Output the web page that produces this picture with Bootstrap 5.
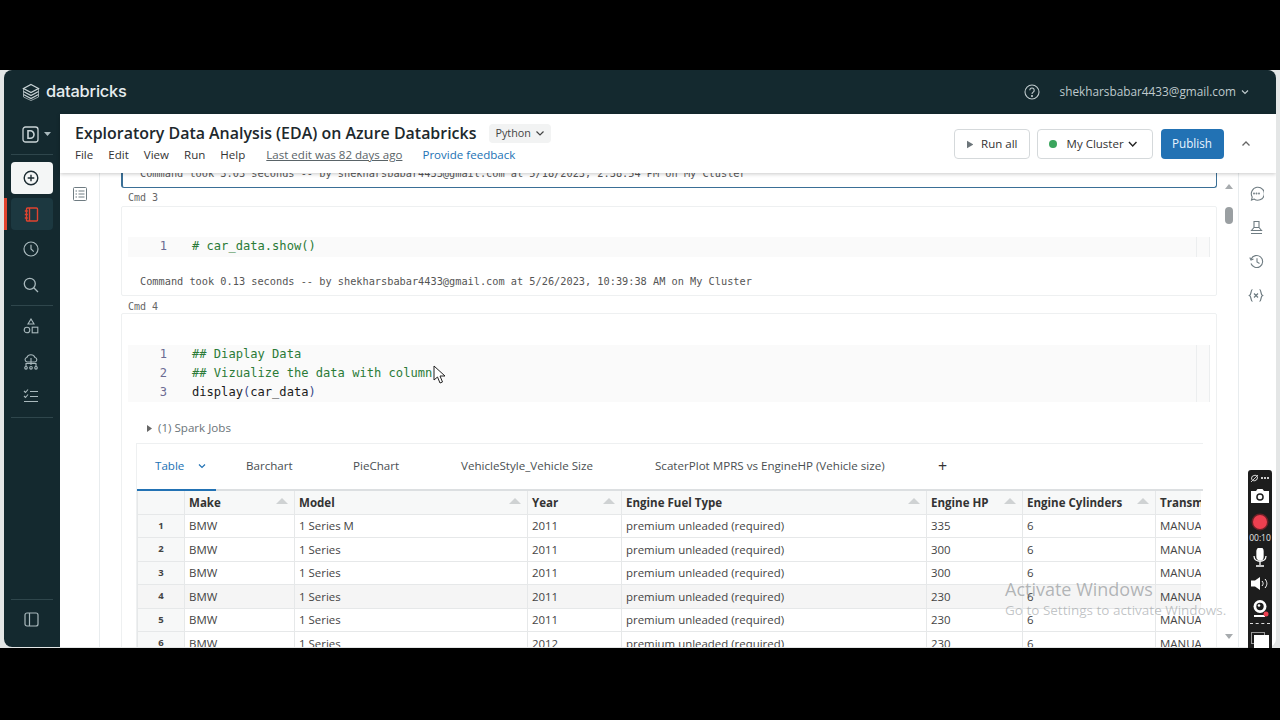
<!DOCTYPE html>
<html lang="en"><head><meta charset="utf-8"><title>EDA</title>
<link href="https://cdn.jsdelivr.net/npm/bootstrap@5.3.0/dist/css/bootstrap.min.css" rel="stylesheet">
<style>
html,body{height:720px;overflow:hidden;background:#000}
body{font-family:"Open Sans","Noto Sans",sans-serif;font-size:12px;color:#333;position:relative}
.stage{margin-top:70px;height:578px;background:#e4e6e6;padding:0 4px 1px}
.win{height:577px;border-radius:8px;overflow:hidden;background:#fff;display:flex;flex-direction:column}
.topbar{height:44px;flex:none;background:#14292f;color:#c9d3d6;padding:0 26px 0 18px}
.brand{font-family:Inter,sans-serif;font-size:16.4px;font-weight:500;color:#e6ecee;letter-spacing:-.2px;margin-left:6px;margin-bottom:2px}
.mail{font-size:11.8px;color:#bfcacd;margin-left:20px}
.below{flex:1;min-height:0;display:flex}
.side{width:56px;flex:none;background:#14292f;position:relative;display:flex;flex-direction:column;align-items:center;color:#a9b9bd}
.sideitem{height:36px;display:flex;align-items:center;justify-content:center;width:100%;padding-right:2px}
.sidesep{width:42px;height:1px;background:#2f464c;margin:0 auto;flex:none}
.plusbtn{width:42px;height:32px;background:#f4f6f6;border-radius:4px;display:flex;align-items:center;justify-content:center;margin-top:7px;padding-right:2px}
.activebtn{width:42px;height:32px;background:#1c3840;border-radius:4px;display:flex;align-items:center;justify-content:center;margin-top:4px;margin-bottom:1px;padding-right:2px}
.redbar{position:absolute;left:0;top:84px;width:3px;height:32px;background:#e0432f}
.dhead{height:40px;gap:5px;margin-left:8px}
.maincol{flex:1;min-width:0;display:flex;flex-direction:column}
.nbhead{height:59px;flex:none;background:#fff;box-shadow:0 1px 4px rgba(0,0,0,.22);position:relative;z-index:2;padding:7px 25px 0 15px}
.nbtitle{font-size:15.95px;font-weight:600;color:#20282c;line-height:24px}
.langbtn{background:#f2f3f3;border-radius:4px;font-size:10.8px;color:#444;padding:1px 6px;margin-left:13px;height:19px}
.menux{font-size:11.55px;color:#333;line-height:18px;margin-top:1px}
.menux span{margin-right:15px}
.menux .lastedit{text-decoration:underline;color:#5a6468;margin-left:6px;margin-right:20px}
.menux .feed{color:#2272b4;margin-right:0}
.tbtn{height:30px;border:1px solid #d5d9db;border-radius:4px;background:#fff;font-size:11.5px;color:#333;display:flex;align-items:center;white-space:nowrap;flex:none}
.runx{padding:0 11px 0 12px;gap:8px;width:76px}
.clusterx{padding:0 15px 0 11px;width:116px}
.pub{height:30px;width:63px;flex:none;background:#2272b4;border-radius:4px;color:#e8f4ff;font-size:11.7px;display:flex;align-items:center;justify-content:center}
.btnrow{padding-top:8px;gap:7.5px}
.bodyrow{flex:1;min-height:0;display:flex;overflow:hidden}
.tocx{width:40px;flex:none;border-right:1px solid #e8ecee;padding:14px 0 0 13px;line-height:0}
.nbscroll{flex:1;min-width:0;padding-left:21px;overflow:hidden}
.sbar{width:21px;flex:none;display:flex;flex-direction:column;align-items:center;padding:11px 0 8px;position:relative}
.thumb{width:8px;height:17px;border-radius:4px;background:#9a9fa2;margin-top:18px;margin-left:3px}
.tri-up{width:0;height:0;border:4px solid transparent;border-top:0;border-bottom:5px solid #a7abae;margin-left:3px}
.tri-dn{width:0;height:0;border:4px solid transparent;border-bottom:0;border-top:5px solid #a7abae;margin-top:auto;margin-left:3px}
.rail{width:38px;flex:none;border-left:1px solid #e8ecee;display:flex;flex-direction:column;align-items:center;padding:10px 3px 0 0;gap:14px;color:#6f7c82}
.railico{height:20px;display:flex;align-items:center}
.cellfrag{height:15px;border:1px solid #3a6f96;border-left-width:2px;border-top:0;border-radius:0 0 3px 3px;overflow:hidden;display:flex;align-items:flex-end;padding:0 0 7px 17px}
.mono{font-family:"DejaVu Sans Mono",monospace}
.cmdnote{font-size:10.28px;color:#555;white-space:nowrap;line-height:14px}
.cmdlbl{font-family:"DejaVu Sans Mono",monospace;font-size:10px;color:#666;height:16px;line-height:16px;padding-left:7px}
.lbl3{margin-top:2px}
.lbl4{height:17px;line-height:21px}
.cellbox{border:1px solid #eef0f1;border-radius:2px;background:#fff}
.cmdcell{height:90px;padding-top:30px}
.codewrap{margin-left:6px;margin-right:6px;background:#fafafa;display:flex;font-size:12.1px;line-height:19px;position:relative}
.nums{width:39px;text-align:right;color:#6b6b93;flex:none}
.codes{padding-left:25px;flex:1;white-space:pre;color:#1b1b1b}
.gutter{width:14px;flex:none;border-left:1px solid #eceeef;border-right:1px solid #eceeef}
.cm{color:#2b7a37}
.pn{color:#3a4a8a}
.cell4{padding-top:31px;height:500px}
.spark{font-size:11.6px;color:#6b7479;height:26px;margin:13px 0 2px;padding-left:25px;display:flex;align-items:center;gap:6px}
.viz{margin:0 13px 0 14px;border:1px solid #eef0f1;border-bottom:0;border-right:0}
.tabsx{height:47px;display:flex;align-items:center;position:relative;font-size:11.6px;color:#4a4f52;border-bottom:2px solid #dcdfe1;padding-bottom:2px}
.tabsx>span{position:absolute;white-space:nowrap}
.tabline{position:absolute;left:0;bottom:-2px;width:79px;height:2px;background:#2272b4}
.dtable{table-layout:fixed;width:1066px;border-collapse:collapse;margin:0;font-size:11.45px;color:#444}
.dtable th{height:23px;font-weight:700;font-size:11.55px;color:#333;background:#f7f8f8;padding:0 4px;position:relative;border:1px solid #e6e8e9;border-top:0;white-space:nowrap;overflow:hidden}
.dtable td{height:23.5px;padding:0 4px;border:1px solid #e6e8e9;border-top:0;white-space:nowrap;overflow:hidden;background:#fff}
.dtable td.idx{background:#f7f8f8;text-align:center;font-weight:700;font-size:9.5px;color:#444}
.dtable tr.hov td{background:#f5f5f5}
.sorta{position:absolute;right:6px;top:7px;width:0;height:0;border:6px solid transparent;border-top:0;border-bottom:6px solid #cfd2d3}
.tblclip{height:160px;overflow:hidden;margin-right:2px}
.wm{position:absolute;left:1005px;top:577px;color:rgba(120,125,130,.55);font-size:18px;line-height:24px;white-space:nowrap;z-index:5}
.wm2{position:absolute;left:1005px;top:601px;color:rgba(120,125,130,.45);font-size:13.5px;line-height:18px;white-space:nowrap;z-index:5}
.cursorx{position:absolute;left:433px;top:365px;z-index:6}
.rec{position:absolute;left:1248px;top:470px;width:24px;height:178px;background:#1d1d1d;border-radius:3px 3px 0 0;z-index:7;display:flex;flex-direction:column;align-items:center;color:#fff;overflow:hidden}
.rectime{font-size:8.5px;line-height:10px;color:#e6e6e6;margin-top:2px}
.recsep{width:20px;border-top:1px dashed #ddd;margin-top:6px}
.rec svg{flex:none}
.r1{margin-top:4px}.r2{margin-top:7px}.r3{margin-top:10px}.r4{margin-top:5px}.r5{margin-top:10px}.r6{margin-top:10px}.r7{margin-top:8px}
</style></head>
<body>
<div class="stage"><div class="win">
 <div class="topbar d-flex align-items-center">
  <svg width="18" height="18" viewBox="0 0 18 18" fill="none" stroke="#c9d3d6" stroke-width="1.2"><path d="M9 1.5 16.5 5.5 9 9.5 1.5 5.5Z"/><path d="M1.5 8.5 9 12.5 16.5 8.5"/><path d="M1.5 11.5 9 15.5 16.5 11.5"/><path d="M1.5 5.5V14L9 17.5 16.5 14V5.5" stroke-width=".7"/></svg>
  <span class="brand">databricks</span>
  <svg class="ms-auto" width="16" height="16" viewBox="0 0 16 16" fill="none" stroke="#bfcacd" stroke-width="1.1"><circle cx="8" cy="8" r="7"/><path d="M5.8 6.2a2.2 2.2 0 1 1 3.4 1.9C8.4 8.6 8 9 8 10"/><circle cx="8" cy="12" r=".5" fill="#bfcacd"/></svg>
  <span class="mail">shekharsbabar4433@gmail.com</span>
  <svg class="ms-1" width="10" height="10" viewBox="0 0 10 10" fill="none" stroke="#bfcacd" stroke-width="1.2"><path d="M2 3.5 5 6.5 8 3.5"/></svg>
 </div>
 <div class="below">
  <div class="side">
   <div class="redbar"></div>
   <div class="d-flex align-items-center justify-content-center dhead">
    <svg width="17" height="17" viewBox="0 0 17 17" fill="none" stroke="#c9d3d6" stroke-width="1.3"><rect x="1" y="1" width="15" height="15" rx="2.5"/><path d="M6 4.800h2.300a3.700 3.700 0 0 1 0 7.400H6Z" stroke-width="1.6"/></svg>
    <svg width="7" height="4" viewBox="0 0 7 4"><path d="M0 0h7L3.500 4Z" fill="#a9b9bd"/></svg>
   </div>
   <div class="sidesep"></div>
   <div class="plusbtn"><svg width="16" height="16" viewBox="0 0 16 16" fill="none" stroke="#1d2d33" stroke-width="1.4"><circle cx="8" cy="8" r="6.800"/><path d="M8 4.700v6.600M4.700 8h6.600"/></svg></div>
   <div class="activebtn"><svg width="15" height="15" viewBox="0 0 15 15" fill="none" stroke="#e0432f" stroke-width="1.4"><rect x="2.500" y="1" width="11" height="13" rx="1"/><path d="M5.500 1v13M.8 4h3M.8 7.500h3M.8 11h3"/></svg></div>
   <div class="sideitem"><svg width="16" height="16" viewBox="0 0 16 16" fill="none" stroke="#a9b9bd" stroke-width="1.2"><circle cx="8" cy="8" r="7"/><path d="M8 3.800V8l2.800 2.600"/></svg></div>
   <div class="sideitem"><svg width="16" height="16" viewBox="0 0 16 16" fill="none" stroke="#a9b9bd" stroke-width="1.3"><circle cx="6.800" cy="6.800" r="5.500"/><path d="M10.800 10.800 15 15"/></svg></div>
   <div class="sidesep" style="margin-top:2px"></div>
   <div class="sideitem" style="margin-top:2px"><svg width="16" height="16" viewBox="0 0 16 16" fill="none" stroke="#a9b9bd" stroke-width="1.1"><path d="M8 1 11 6H5Z"/><circle cx="4" cy="12" r="2.800"/><rect x="9.200" y="9.200" width="5.600" height="5.600"/></svg></div>
   <div class="sideitem"><svg width="16" height="16" viewBox="0 0 16 16" fill="none" stroke="#a9b9bd" stroke-width="1.1"><path d="M4 8a2.300 2.300 0 0 1-.2-4.500A4.400 4.400 0 0 1 12 3.500 2.300 2.300 0 0 1 12 8Z"/><path d="M8 4v7M3 13V9.500h10V13"/><circle cx="3" cy="13.800" r="1.300"/><circle cx="8" cy="13.800" r="1.300"/><circle cx="13" cy="13.800" r="1.300"/></svg></div>
   <div class="sideitem" style="height:32px"><svg width="16" height="16" viewBox="0 0 16 16" fill="none" stroke="#a9b9bd" stroke-width="1.1"><path d="M1 3 2.500 4.500 5 1.500M1 8 2.500 9.500 5 6.500M7 3.500h8M7 8.500h8M1 13.500h14"/></svg></div>
   <div class="sidesep" style="margin-top:5px"></div>
   <div class="sidesep mt-auto"></div>
   <div class="sideitem" style="height:38px;margin-bottom:9px"><svg width="15" height="15" viewBox="0 0 15 15" fill="none" stroke="#a9b9bd" stroke-width="1.2"><rect x="1" y="1" width="13" height="13" rx="2"/><path d="M5.500 1v13"/></svg></div>
  </div>
  <div class="maincol">
   <div class="nbhead d-flex justify-content-between">
    <div>
     <div class="d-flex align-items-center"><span class="nbtitle">Exploratory Data Analysis (EDA) on Azure Databricks</span>
      <span class="langbtn d-flex align-items-center gap-1">Python <svg width="10" height="10" viewBox="0 0 10 10" fill="none" stroke="#444" stroke-width="1.2"><path d="M1.500 3.500 5 7 8.500 3.500"/></svg></span></div>
     <div class="menux"><span>File</span><span>Edit</span><span>View</span><span>Run</span><span>Help</span><span class="lastedit">Last edit was 82 days ago</span><span class="feed">Provide feedback</span></div>
    </div>
    <div class="d-flex align-items-start btnrow">
     <div class="tbtn runx"><svg width="8" height="9" viewBox="0 0 8 9"><path d="M0 0 8 4.500 0 9Z" fill="#6c757a"/></svg>Run all</div>
     <div class="tbtn clusterx"><span class="rounded-circle d-inline-block" style="width:8px;height:8px;background:#3ba55d;margin-right:10px"></span>My Cluster<svg class="ms-1" width="10" height="10" viewBox="0 0 10 10" fill="none" stroke="#222" stroke-width="1.5"><path d="M1 3 5 7 9 3"/></svg></div>
     <div class="pub">Publish</div>
     <svg style="margin:10px 0 0 10px" width="10" height="10" viewBox="0 0 10 10" fill="none" stroke="#666" stroke-width="1.3"><path d="M1.500 6.500 5 3 8.500 6.500"/></svg>
    </div>
   </div>
   <div class="bodyrow">
    <div class="tocx"><svg width="14" height="14" viewBox="0 0 14 14" fill="none" stroke="#6f7c82" stroke-width="1"><rect x=".5" y=".5" width="13" height="13" rx="1"/><path d="M2.500 4h1.500M2.500 7h1.500M2.500 10h1.500M5.500 4h6M5.500 7h6M5.500 10h6"/></svg></div>
    <div class="nbscroll">
     <div class="cellfrag"><span class="cmdnote mono">Command took 3.03 seconds -- by shekharsbabar4433@gmail.com at 5/18/2023, 2:38:54 PM on My Cluster</span></div>
     <div class="cmdlbl lbl3">Cmd 3</div>
     <div class="cellbox cmdcell">
      <div class="codewrap mono" style="height:20px"><div class="nums">1</div><div class="codes"><span class="cm"># car_data.show()</span></div><div class="gutter"></div></div>
      <div class="cmdnote mono" style="padding:17px 0 0 18px">Command took 0.13 seconds -- by shekharsbabar4433@gmail.com at 5/26/2023, 10:39:38 AM on My Cluster</div>
     </div>
     <div class="cmdlbl lbl4">Cmd 4</div>
     <div class="cellbox cell4">
      <div class="codewrap mono"><div class="nums">1<br>2<br>3</div><div class="codes"><span class="cm">## Diaplay Data</span><br><span class="cm">## Vizualize the data with column</span><br>display<span class="pn">(</span>car_data<span class="pn">)</span></div><div class="gutter"></div></div>
      <div class="spark"><svg width="5" height="7" viewBox="0 0 5 7"><path d="M0 0 5 3.500 0 7Z" fill="#666"/></svg>(1) Spark Jobs</div>
      <div class="viz">
       <div class="tabsx">
        <span style="left:18px;color:#2272b4">Table</span>
        <svg style="position:absolute;left:60px" width="10" height="10" viewBox="0 0 10 10" fill="none" stroke="#2272b4" stroke-width="1.2"><path d="M2 3.500 5 6.500 8 3.500"/></svg>
        <span style="left:109px">Barchart</span><span style="left:216px">PieChart</span><span style="left:324px">VehicleStyle_Vehicle Size</span><span style="left:518px">ScaterPlot MPRS vs EngineHP (Vehicle size)</span>
        <span style="left:801px;font-size:16px;color:#333">+</span>
        <div class="tabline"></div>
       </div>
       <div class="tblclip">
       <table class="dtable"><colgroup><col style="width:47px"><col style="width:110px"><col style="width:233px"><col style="width:94px"><col style="width:305px"><col style="width:96px"><col style="width:133px"><col style="width:48px"></colgroup>
        <thead><tr><th></th><th>Make<i class="sorta"></i></th><th>Model<i class="sorta"></i></th><th>Year<i class="sorta"></i></th><th>Engine Fuel Type<i class="sorta"></i></th><th>Engine HP<i class="sorta"></i></th><th>Engine Cylinders<i class="sorta"></i></th><th>Transm</th></tr></thead>
        <tbody>
        <tr><td class="idx">1</td><td>BMW</td><td>1 Series M</td><td>2011</td><td>premium unleaded (required)</td><td>335</td><td>6</td><td>MANUAL</td></tr>
        <tr><td class="idx">2</td><td>BMW</td><td>1 Series</td><td>2011</td><td>premium unleaded (required)</td><td>300</td><td>6</td><td>MANUAL</td></tr>
        <tr><td class="idx">3</td><td>BMW</td><td>1 Series</td><td>2011</td><td>premium unleaded (required)</td><td>300</td><td>6</td><td>MANUAL</td></tr>
        <tr class="hov"><td class="idx">4</td><td>BMW</td><td>1 Series</td><td>2011</td><td>premium unleaded (required)</td><td>230</td><td>6</td><td>MANUAL</td></tr>
        <tr><td class="idx">5</td><td>BMW</td><td>1 Series</td><td>2011</td><td>premium unleaded (required)</td><td>230</td><td>6</td><td>MANUAL</td></tr>
        <tr><td class="idx">6</td><td>BMW</td><td>1 Series</td><td>2012</td><td>premium unleaded (required)</td><td>230</td><td>6</td><td>MANUAL</td></tr>
        </tbody></table>
       </div>
      </div>
     </div>
    </div>
    <div class="sbar"><div class="tri-up"></div><div class="thumb"></div><div class="tri-dn"></div></div>
    <div class="rail">
     <div class="railico"><svg width="15" height="15" viewBox="0 0 15 15" fill="none" stroke="#6f7c82" stroke-width="1.1"><path d="M2.500 14 3.200 11A6.500 6.500 0 1 1 5 13Z"/><circle cx="5" cy="7.500" r=".4"/><circle cx="7.500" cy="7.500" r=".4"/><circle cx="10" cy="7.500" r=".4"/></svg></div>
     <div class="railico"><svg width="15" height="15" viewBox="0 0 15 15" fill="none" stroke="#6f7c82" stroke-width="1.1"><path d="M5 1.500h5v6H5ZM5 7.500 2.500 10.500h10L10 7.500M2 13.500h11"/></svg></div>
     <div class="railico"><svg width="15" height="15" viewBox="0 0 15 15" fill="none" stroke="#6f7c82" stroke-width="1.1"><path d="M2.200 5A6 6 0 1 1 2 9.500"/><path d="M.8 3.500 2 6 4.500 5"/><path d="M8 4.200V8l2.500 1.500"/></svg></div>
     <div class="railico"><svg width="16" height="15" viewBox="0 0 16 15" fill="none" stroke="#6f7c82" stroke-width="1.2"><path d="M4.500 1.500C2.500 1.500 3.700 6.500 1.500 7.500 3.700 8.500 2.500 13.500 4.500 13.500M11.500 1.500C13.500 1.500 12.300 6.500 14.500 7.500 12.300 8.500 13.500 13.500 11.500 13.500M6 5.500 10 9.500M10 5.500 6 9.500"/></svg></div>
    </div>
   </div>
  </div>
 </div>
</div></div>
<div class="wm">Activate Windows</div>
<div class="wm2">Go to Settings to activate Windows.</div>
<svg class="cursorx" width="13" height="19" viewBox="0 0 13 19"><path d="M1 1V15L4.500 12 7 18 9.500 17 7 11H12Z" fill="#fff" stroke="#222" stroke-width="1"/></svg>
<div class="rec">
 <svg class="r1" width="20" height="8" viewBox="0 0 20 8" fill="#ccc"><ellipse cx="4.500" cy="4" rx="3" ry="2.500" fill="none" stroke="#ccc" transform="rotate(-35 4.500 4)"/><path d="M1 8 8 1" stroke="#ccc"/><rect x="11" y="3" width="2" height="2"/><rect x="14" y="3" width="2" height="2"/><rect x="17" y="3" width="2" height="2"/></svg>
 <svg class="r2" width="18" height="14" viewBox="0 0 18 14"><path d="M0 2H5L6.500 0H11.500L13 2H18V14H0Z" fill="#fff"/><circle cx="9" cy="8" r="3.800" fill="#1d1d1d"/><circle cx="9" cy="8" r="2.300" fill="#fff"/></svg>
 <svg class="r3" width="18" height="18" viewBox="0 0 18 18"><circle cx="9" cy="9" r="8.500" fill="#6a2026"/><circle cx="9" cy="9" r="7" fill="#ee4050"/></svg>
 <div class="rectime">00:10</div>
 <svg class="r4" width="14" height="19" viewBox="0 0 14 19" fill="none" stroke="#fff" stroke-width="1.300"><rect x="4" y="0" width="6" height="12" rx="3" fill="#fff"/><path d="M1 8c0 7 12 7 12 0M7 14v3M3 18h8"/></svg>
 <svg class="r5" width="18" height="13" viewBox="0 0 18 13" fill="#fff"><path d="M0 3.500H4L9 0V13L4 9.500H0Z"/><path d="M11 4c1.500 2 1.500 3 0 5M14 2c2.500 3 2.500 6 0 9" fill="none" stroke="#fff"/></svg>
 <svg class="r6" width="17" height="17" viewBox="0 0 17 17"><circle cx="8" cy="6.500" r="6.500" fill="#fff"/><circle cx="8" cy="6.500" r="3.700" fill="#1d1d1d"/><circle cx="7" cy="5.500" r="1.300" fill="#fff"/><path d="M2 15H13V17H2Z" fill="#fff"/><circle cx="14" cy="14" r="2.500" fill="#ee4050"/></svg>
 <div class="recsep"></div>
 <svg class="r7" width="18" height="16" viewBox="0 0 18 16"><rect x=".5" y=".5" width="13" height="11" fill="none" stroke="#999"/><rect x="3" y="3" width="15" height="13" fill="#fff"/></svg>
</div>
<script src="https://cdn.jsdelivr.net/npm/bootstrap@5.3.0/dist/js/bootstrap.bundle.min.js"></script>
</body></html>
